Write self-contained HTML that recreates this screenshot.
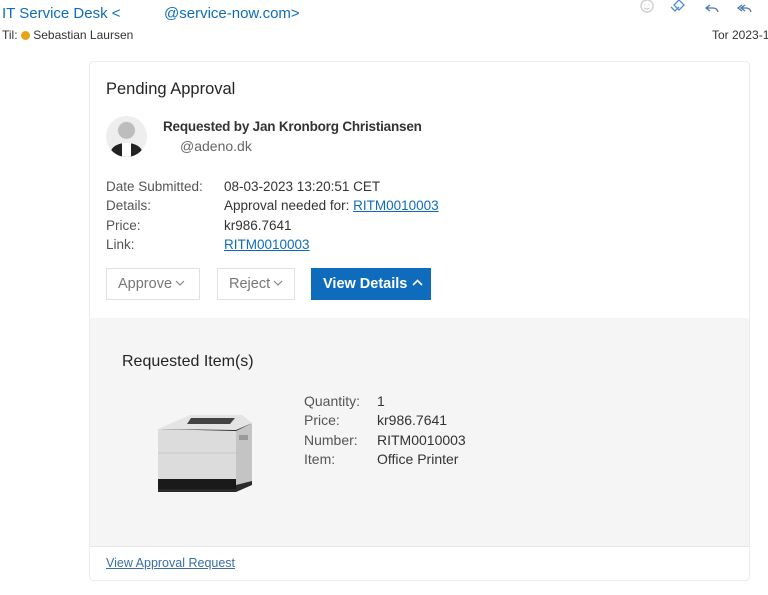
<!DOCTYPE html>
<html><head><meta charset="utf-8"><style>
*{margin:0;padding:0;box-sizing:border-box}
body{width:768px;height:595px;background:#fff;font-family:"Liberation Sans",sans-serif;color:#242424;position:relative;overflow:hidden;font-size:13.5px}
.a{position:absolute;white-space:nowrap}
.lnk{color:#0f6cbd;text-decoration:underline}
.lbl{color:#555}
.btn{position:absolute;top:268px;height:32px;border:1px solid #e1e1e1;background:#fff;color:#777;font-size:14.5px;line-height:30px;padding-left:11px}
.btn svg{vertical-align:2px;margin-left:3px}
</style></head><body>
<div class="a" style="left:2px;top:5px;color:#0f6cbd;font-size:15px">IT Service Desk &lt;</div>
<div class="a" style="left:164px;top:5px;color:#0f6cbd;font-size:15px">@service-now.com&gt;</div>
<div class="a" style="left:2px;top:28px;font-size:12px;color:#333">Til: <span style="display:inline-block;width:9px;height:9px;border-radius:50%;background:#e9a319;vertical-align:-1px"></span> Sebastian Laursen</div>
<div class="a" style="left:712px;top:28px;font-size:12px;color:#333">Tor 2023-10</div>
<svg class="a" style="left:638px;top:0" width="130" height="16" viewBox="0 0 130 16" fill="none" stroke-width="1.3">
<circle cx="9" cy="6" r="6" stroke="#ccc"/><circle cx="7" cy="5" r=".6" fill="#ccc" stroke="none"/><circle cx="11" cy="5" r=".6" fill="#ccc" stroke="none"/><path d="M6.5 8q2.5 2 5 0" stroke="#ccc"/>
<path d="M36 5l5-5 5 5-5 5z M41 0l5 5-5 5" stroke="#4f8fd8"/><path d="M33 7l4 4 4-4" stroke="#4f8fd8"/>
<path d="M72 5l-4 3 4 3M68 8h7q4 0 5 4" stroke="#4a78b0"/>
<path d="M104 5l-4 3 4 3M107 5l-4 3 4 3M103 8h5q4 0 5 4" stroke="#4a78b0"/>
</svg>
<div class="a" style="left:89px;top:61px;width:661px;height:520px;border:1px solid #ececec;border-radius:4px"></div>
<div class="a" style="left:106px;top:80px;font-size:16.5px;color:#242424">Pending Approval</div>
<div class="a" style="left:106px;top:116px;width:41px;height:41px;border-radius:50%;background:radial-gradient(circle at 50% 35%,#bdbdbd 0 8px,#eee 9px);overflow:hidden"><div style="position:absolute;left:5px;top:27px;width:31px;height:18px;border-radius:50% 50% 0 0;background:#222"></div><div style="position:absolute;left:16px;top:27px;width:9px;height:14px;background:#fff"></div></div>
<div class="a" style="left:163px;top:119px;font-size:13.5px;font-weight:bold;color:#333;letter-spacing:-0.2px">Requested by Jan Kronborg Christiansen</div>
<div class="a" style="left:180px;top:138px;font-size:14px;color:#666">@adeno.dk</div>
<div class="a lbl" style="left:106px;top:177px;line-height:19.3px">Date Submitted:<br>Details:<br>Price:<br>Link:</div>
<div class="a" style="left:224px;top:177px;line-height:19.3px;color:#333">08-03-2023 13:20:51 CET<br>Approval needed for: <span class="lnk">RITM0010003</span><br>kr986.7641<br><span class="lnk">RITM0010003</span></div>
<div class="btn" style="left:106px;width:94px">Approve<svg width="10" height="6" viewBox="0 0 10 6"><path d="M1 1l4 4 4-4" stroke="#888" stroke-width="1.2" fill="none"/></svg></div>
<div class="btn" style="left:217px;width:78px">Reject<svg width="10" height="6" viewBox="0 0 10 6"><path d="M1 1l4 4 4-4" stroke="#888" stroke-width="1.2" fill="none"/></svg></div>
<div class="btn" style="left:311px;width:120px;background:#0f6cbd;border-color:#0f6cbd;color:#fff;font-weight:bold">View Details<svg width="11" height="7" viewBox="0 0 11 7" style="margin-left:5px"><path d="M1 6l4.5-4.5 4.5 4.5" stroke="#fff" stroke-width="1.6" fill="none"/></svg></div>
<div class="a" style="left:90px;top:318px;width:659px;height:229px;background:#f5f5f5;border-bottom:1px solid #e6e6e6"></div>
<div class="a" style="left:122px;top:353px;font-size:16px;color:#242424">Requested Item(s)</div>
<svg class="a" style="left:155px;top:405px" width="100" height="90" viewBox="0 0 100 90">
<path d="M3 26l30-14h52l12 8v60l-16 7H3z" fill="#2a2a2a"/>
<path d="M3 24l32-14h52l10 8-16 7z" fill="#e4e4e4"/>
<path d="M3 24l78 2v52H3z" fill="#dcdcdc"/>
<path d="M81 26l16-8v58l-16 4z" fill="#c4c4c4"/>
<path d="M36 13h44l-5 6H32z" fill="#444"/>
<rect x="3" y="74" width="78" height="10" fill="#1a1a1a"/>
<rect x="84" y="30" width="9" height="5" fill="#999"/>
<path d="M3 48h78" stroke="#c8c8c8"/>
</svg>
<div class="a lbl" style="left:304px;top:392px;line-height:19.3px;font-size:14px">Quantity:<br>Price:<br>Number:<br>Item:</div>
<div class="a" style="left:377px;top:392px;line-height:19.3px;font-size:14px;color:#333">1<br>kr986.7641<br>RITM0010003<br>Office Printer</div>
<div class="a lnk" style="left:106px;top:556px;font-size:12.5px;color:#3a6ea5">View Approval Request</div>
</body></html>
